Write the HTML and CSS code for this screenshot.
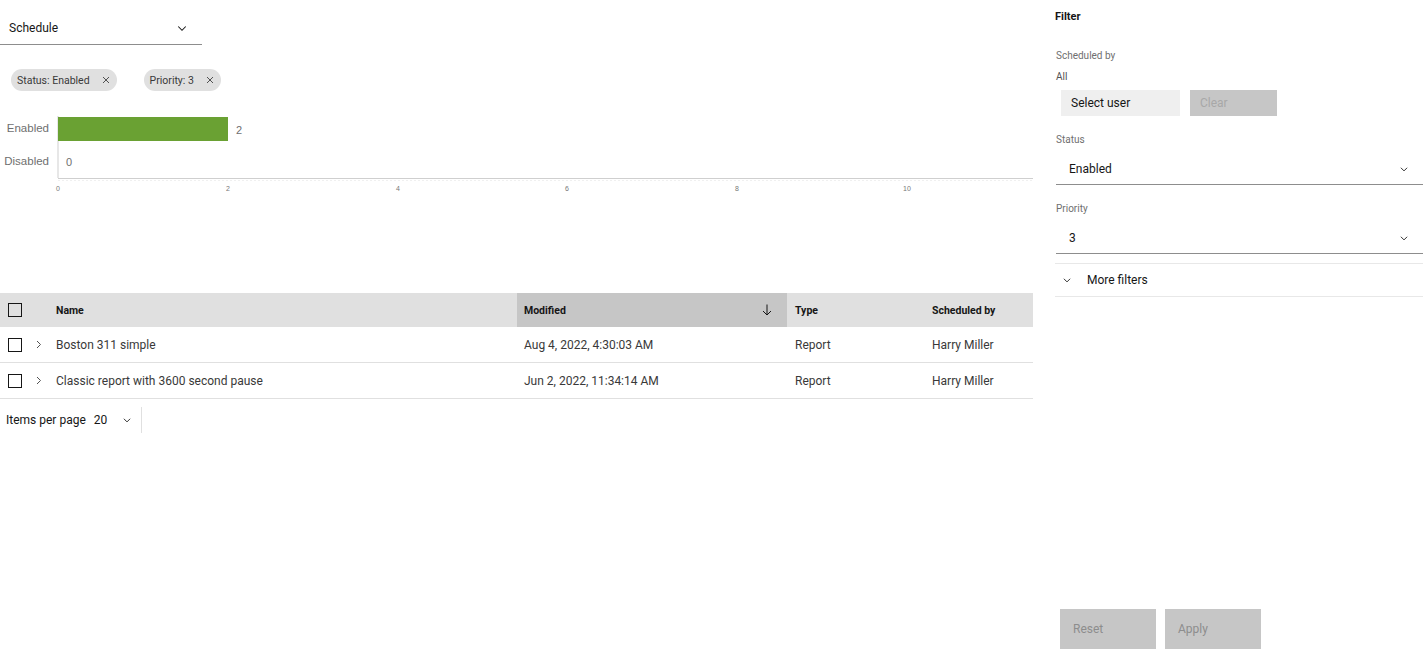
FILE: index.html
```html
<!DOCTYPE html>
<html lang="en">
<head>
<meta charset="utf-8">
<title>Schedule</title>
<link rel="stylesheet" href="styles.css">
</head>
<body>
<div class="page">
  <main class="main">
    <div class="view-select">
      <span>Schedule</span>
      <svg class="chev" width="12" height="12" viewBox="0 0 16 16"><path d="M3 6 L8 11 L13 6" fill="none" stroke="#161616" stroke-width="1.4"/></svg>
    </div>

    <div class="tags">
      <span class="tag">Status: Enabled <svg width="8" height="8" viewBox="0 0 8 8"><path d="M1 1 L7 7 M7 1 L1 7" stroke="#525252" stroke-width="1"/></svg></span>
      <span class="tag">Priority: 3 <svg width="8" height="8" viewBox="0 0 8 8"><path d="M1 1 L7 7 M7 1 L1 7" stroke="#525252" stroke-width="1"/></svg></span>
    </div>

    <div class="chart">
      <svg width="1033" height="90" viewBox="0 0 1033 90">
        <line x1="58" y1="6" x2="58" y2="68" stroke="#cfcfcf" stroke-width="1"/>
        <line x1="58" y1="68.5" x2="1033" y2="68.5" stroke="#cfcfcf" stroke-width="1"/>
        <line x1="58" y1="70.5" x2="1033" y2="70.5" stroke="#f0f0f0" stroke-width="1" stroke-dasharray="2 2"/>
        <rect x="58" y="7" width="170" height="24" fill="#6aa133"/>
        <text class="cat" x="49" y="22" text-anchor="end">Enabled</text>
        <text class="cat" x="49" y="55" text-anchor="end">Disabled</text>
        <text class="val" x="236" y="24">2</text>
        <text class="val" x="66" y="56">0</text>
        <g class="tick">
          <text x="58" y="81" text-anchor="middle">0</text>
          <text x="228" y="81" text-anchor="middle">2</text>
          <text x="398" y="81" text-anchor="middle">4</text>
          <text x="567" y="81" text-anchor="middle">6</text>
          <text x="737" y="81" text-anchor="middle">8</text>
          <text x="907" y="81" text-anchor="middle">10</text>
        </g>
      </svg>
    </div>

    <div class="table">
      <div class="row head">
        <div class="c-check"><span class="box"></span></div>
        <div class="c-name">Name</div>
        <div class="c-mod sorted">Modified
          <svg width="10" height="12" viewBox="0 0 10 12"><path d="M5 0.5 V11 M1 7 L5 11 L9 7" fill="none" stroke="#161616" stroke-width="1"/></svg>
        </div>
        <div class="c-type">Type</div>
        <div class="c-by">Scheduled by</div>
      </div>
      <div class="row">
        <div class="c-check"><span class="box"></span>
          <svg class="exp" width="6" height="9" viewBox="0 0 6 9"><path d="M1 1 L4.5 4.5 L1 8" fill="none" stroke="#525252" stroke-width="1"/></svg></div>
        <div class="c-name">Boston 311 simple</div>
        <div class="c-mod">Aug 4, 2022, 4:30:03 AM</div>
        <div class="c-type">Report</div>
        <div class="c-by">Harry Miller</div>
      </div>
      <div class="row">
        <div class="c-check"><span class="box"></span>
          <svg class="exp" width="6" height="9" viewBox="0 0 6 9"><path d="M1 1 L4.5 4.5 L1 8" fill="none" stroke="#525252" stroke-width="1"/></svg></div>
        <div class="c-name">Classic report with 3600 second pause</div>
        <div class="c-mod">Jun 2, 2022, 11:34:14 AM</div>
        <div class="c-type">Report</div>
        <div class="c-by">Harry Miller</div>
      </div>
    </div>

    <div class="pager">
      <span class="pager-label">Items per page</span>
      <span class="pager-num">20</span>
      <svg width="10" height="10" viewBox="0 0 16 16"><path d="M3 6 L8 11 L13 6" fill="none" stroke="#161616" stroke-width="1.4"/></svg>
      <span class="pager-div"></span>
    </div>
  </main>

  <aside class="filter">
    <h2 class="filter-title">Filter</h2>
    <div class="f-label f-first">Scheduled by</div>
    <div class="f-all">All</div>
    <div class="btn-row">
      <button class="btn light">Select user</button>
      <button class="btn disabled clear">Clear</button>
    </div>

    <div class="f-label f-sec">Status</div>
    <div class="dropdown">
      <span>Enabled</span>
      <svg width="10" height="10" viewBox="0 0 16 16"><path d="M3 6 L8 11 L13 6" fill="none" stroke="#161616" stroke-width="1.4"/></svg>
    </div>

    <div class="f-label f-sec">Priority</div>
    <div class="dropdown">
      <span>3</span>
      <svg width="10" height="10" viewBox="0 0 16 16"><path d="M3 6 L8 11 L13 6" fill="none" stroke="#161616" stroke-width="1.4"/></svg>
    </div>

    <div class="more">
      <svg width="10" height="10" viewBox="0 0 16 16"><path d="M3 6 L8 11 L13 6" fill="none" stroke="#161616" stroke-width="1.4"/></svg>
      <span>More filters</span>
    </div>

    <div class="actions">
      <button class="btn disabled big">Reset</button>
      <button class="btn disabled big">Apply</button>
    </div>
  </aside>
</div>
</body>
</html>
```

FILE: styles.css
```css
* { box-sizing: border-box; }
html, body { margin: 0; padding: 0; background: #fff; }
body {
  font-family: Roboto, "Noto Sans", "Liberation Sans", sans-serif;
  color: #161616;
  font-size: 12px;
}
.page {
  display: flex;
  height: 652px;
  overflow: hidden;
}
.main {
  width: 1033px;
  flex: none;
  display: flex;
  flex-direction: column;
}
.view-select {
  margin-top: 12px;
  width: 202px;
  height: 33px;
  border-bottom: 1px solid #8d8d8d;
  display: flex;
  align-items: center;
  justify-content: space-between;
  padding: 0 14px 0 9px;
  font-size: 12px;
}
.tags {
  display: flex;
  gap: 27px;
  margin-top: 24px;
  padding-left: 11px;
}
.tag {
  height: 22px;
  border-radius: 11px;
  background: #e0e0e0;
  display: inline-flex;
  align-items: center;
  gap: 12px;
  padding: 0 7px 0 6px;
  font-size: 10.5px;
  color: #393939;
}
.chart { margin-top: 19px; height: 90px; }
.chart .cat { font-family: "Liberation Sans", Arial, sans-serif; font-size: 11.5px; fill: #6f6f6f; }
.chart .val { font-family: "Liberation Sans", Arial, sans-serif; font-size: 11px; fill: #6f6f6f; }
.chart .tick text { font-family: "Liberation Sans", Arial, sans-serif; font-size: 7px; fill: #777; }

.table { margin-top: 93px; }
.row {
  display: flex;
  height: 36px;
  border-bottom: 1px solid #e0e0e0;
  align-items: stretch;
  font-size: 12px;
  color: #393939;
}
.row > div { display: flex; align-items: center; }
.row.head {
  height: 34px;
  background: #e0e0e0;
  border-bottom: none;
  font-weight: 700;
  font-size: 10.5px;
  color: #161616;
}
.c-check { width: 49px; padding-left: 8px; gap: 14px; }
.box {
  width: 14px; height: 14px;
  border: 1px solid #161616;
  background: #fff;
  display: inline-block;
}
.head .box { background: transparent; }
.c-name { width: 468px; padding-left: 7px; }
.c-mod { width: 270px; padding-left: 7px; }
.c-mod.sorted {
  background: #c6c6c6;
  justify-content: space-between;
  padding-right: 15px;
}
.c-type { width: 137px; padding-left: 8px; }
.c-by { flex: 1; padding-left: 8px; }

.pager {
  display: flex;
  align-items: center;
  height: 26px;
  margin-top: 8px;
  padding-left: 6px;
  font-size: 12px;
  color: #161616;
}
.pager-num { margin-left: 8px; }
.pager svg { margin-left: 15px; }
.pager-div { width: 1px; height: 26px; background: #e0e0e0; margin-left: 9px; }

.filter {
  flex: 1;
  margin-left: 7px;
  padding: 0 5px 0 15px;
  display: flex;
  flex-direction: column;
}
.filter-title {
  margin: 10px 0 0;
  font-size: 11px;
  font-weight: 700;
  line-height: 13px;
}
.f-label {
  font-size: 10px;
  color: #6f6f6f;
  line-height: 12px;
  padding-left: 1px;
}
.f-label.f-first { margin-top: 27px; }
.f-label.f-sec { margin-top: 18px; }
.f-all {
  font-size: 10px;
  color: #525252;
  margin-top: 9px;
  line-height: 12px;
  padding-left: 1px;
}
.btn-row { display: flex; gap: 10px; margin-top: 7px; padding-left: 6px; }
.btn {
  font-family: inherit;
  border: none;
  font-size: 12px;
  text-align: left;
  padding: 0 10px;
  height: 26px;
}
.btn.light { background: #efefef; color: #161616; width: 119px; }
.btn.disabled { background: #c6c6c6; color: #8d8d8d; }
.btn.clear { width: 87px; color: #a8a8a8; }
.dropdown {
  margin-top: 7px;
  height: 32px;
  border-bottom: 1px solid #8d8d8d;
  display: flex;
  align-items: center;
  justify-content: space-between;
  padding: 0 14px 0 13px;
  font-size: 12px;
  margin-left: 1px;
}
.more {
  margin-top: 9px;
  height: 34px;
  border-top: 1px solid #e8e8e8;
  border-bottom: 1px solid #e8e8e8;
  display: flex;
  align-items: center;
  gap: 15px;
  padding-left: 7px;
  font-size: 12px;
}
.actions {
  margin-top: auto;
  margin-bottom: 3px;
  display: flex;
  gap: 9px;
  padding-left: 5px;
}
.btn.big { width: 96px; height: 40px; padding-left: 13px; }
```
